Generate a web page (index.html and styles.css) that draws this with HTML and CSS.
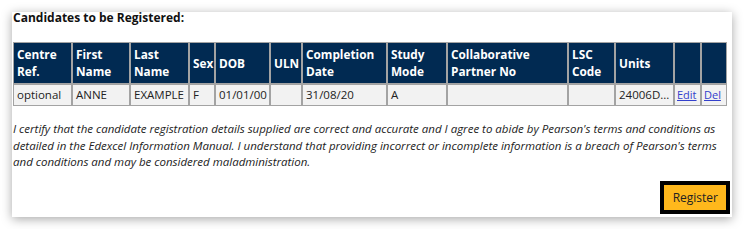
FILE: index.html
```html
<!DOCTYPE html>
<html lang="en">
<head>
    <meta charset="UTF-8">
    <title>Candidates to be Registered</title>
    <link rel="stylesheet" href="styles.css">
</head>
<body>

    <div class="panel">
        <h3 class="panel-title">Candidates to be Registered:</h3>

        <table class="reg-table">
            <colgroup>
                <col class="c-ref"><col class="c-first"><col class="c-last"><col class="c-sex">
                <col class="c-dob"><col class="c-uln"><col class="c-date"><col class="c-mode">
                <col class="c-partner"><col class="c-lsc"><col class="c-units"><col class="c-edit">
                <col class="c-del">
            </colgroup>
            <thead>
                <tr>
                    <th>Centre Ref.</th>
                    <th>First Name</th>
                    <th>Last Name</th>
                    <th>Sex</th>
                    <th>DOB</th>
                    <th>ULN</th>
                    <th>Completion Date</th>
                    <th>Study Mode</th>
                    <th>Collaborative Partner No</th>
                    <th>LSC Code</th>
                    <th>Units</th>
                    <th></th>
                    <th></th>
                </tr>
            </thead>
            <tbody>
                <tr>
                    <td>optional</td>
                    <td>ANNE</td>
                    <td>EXAMPLE</td>
                    <td>F</td>
                    <td>01/01/00</td>
                    <td></td>
                    <td>31/08/20</td>
                    <td>A</td>
                    <td></td>
                    <td></td>
                    <td class="units">24006D...</td>
                    <td class="link-cell"><a href="#">Edit</a></td>
                    <td class="link-cell"><a href="#">Del</a></td>
                </tr>
            </tbody>
        </table>

        <p class="declaration">I certify that the candidate registration details supplied are correct and accurate and I agree to abide by Pearson's terms and conditions as detailed in the Edexcel Information Manual. I understand that providing incorrect or incomplete information is a breach of Pearson's terms and conditions and may be considered maladministration.</p>

        <div class="actions">
            <button class="btn-register">Register</button>
        </div>
    </div>

</body>
</html>
```

FILE: styles.css
```css
* {
    box-sizing: border-box;
}

body {
    margin: 0;
    padding: 12px;
    background: #ffffff;
    font-family: "Open Sans", Arial, sans-serif;
    color: #222;
}

.panel {
    width: 720px;
    height: 205px;
    background: #fff;
    padding: 0 2px 0 1px;
    box-shadow: 0 2px 10px rgba(0, 0, 0, 0.35);
}

.panel-title {
    margin: 0 0 19px;
    font-size: 12px;
    line-height: 11px;
    font-weight: bold;
    color: #111;
}

.reg-table {
    width: 714px;
    table-layout: fixed;
    border-collapse: separate;
    border-spacing: 0;
    font-size: 11.5px;
}

.reg-table th,
.reg-table td {
    border: 1px solid #a3a3a3;
    text-align: left;
}

.reg-table th {
    background: #012a52;
    color: #fff;
    font-size: 11.8px;
    font-weight: bold;
    line-height: 17px;
    padding: 3px 3px;
    vertical-align: middle;
}

.reg-table td {
    background: #f2f2f2;
    line-height: 16px;
    padding: 2px 3px;
    white-space: nowrap;
}

.reg-table td.units {
    overflow: hidden;
    padding-right: 2px;
}

.reg-table td.link-cell {
    padding: 2px 2px;
    font-size: 11px;
}

.reg-table a {
    color: #3340cc;
}

.c-ref { width: 59px; }
.c-first { width: 58px; }
.c-last { width: 59px; }
.c-sex { width: 26px; }
.c-dob { width: 55px; }
.c-uln { width: 32px; }
.c-date { width: 85px; }
.c-mode { width: 60px; }
.c-partner { width: 121px; }
.c-lsc { width: 47px; }
.c-units { width: 59px; }
.c-edit { width: 27px; }
.c-del { width: 26px; }

.declaration {
    margin: 15px 0 0;
    width: 714px;
    font-size: 11.5px;
    line-height: 16.5px;
    font-style: italic;
    color: #222;
}

.actions {
    display: flex;
    justify-content: flex-end;
    margin-top: 10px;
}

.btn-register {
    border: 4px solid #000;
    background: #ffb81c;
    color: #222;
    font-family: "Open Sans", Arial, sans-serif;
    font-size: 12px;
    line-height: 17px;
    padding: 4px 8px 4px 9px;
    cursor: pointer;
}
```
